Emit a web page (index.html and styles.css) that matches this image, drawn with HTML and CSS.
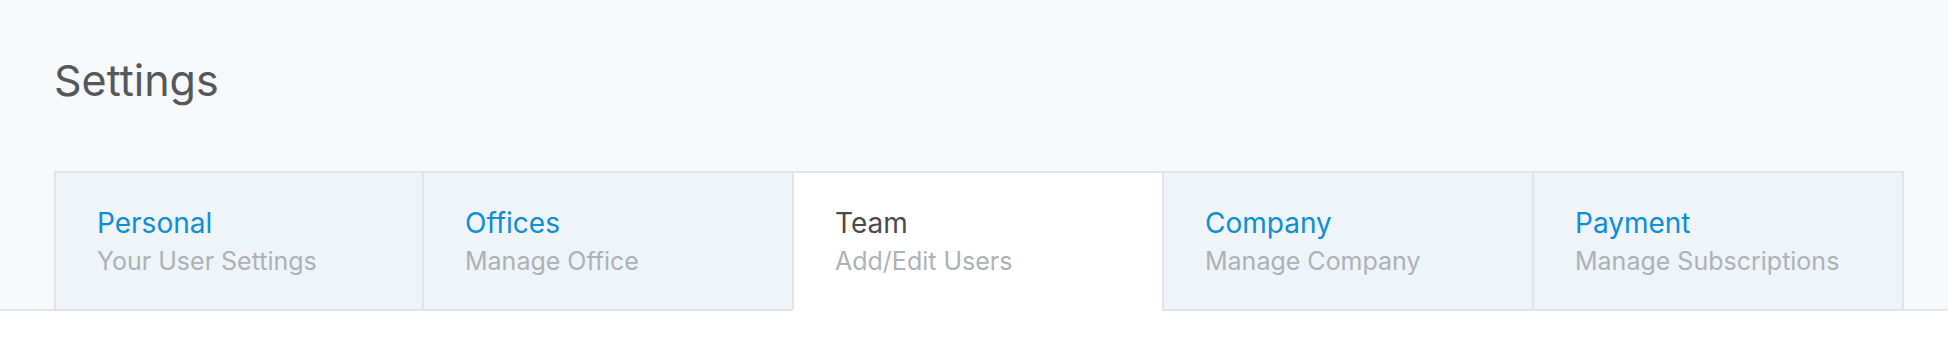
FILE: index.html
```html
<!DOCTYPE html>
<html lang="en">
<head>
<meta charset="utf-8">
<title>Settings</title>
<link rel="stylesheet" href="styles.css">
</head>
<body>
<header class="header">
  <h1 class="page-title">Settings</h1>
  <nav class="tabs">
    <a class="tab tab-first" href="#"><span class="tab-title">Personal</span><span class="tab-sub">Your User Settings</span></a>
    <a class="tab" href="#"><span class="tab-title">Offices</span><span class="tab-sub">Manage Office</span></a>
    <a class="tab tab-active" href="#"><span class="tab-title">Team</span><span class="tab-sub">Add/Edit Users</span></a>
    <a class="tab" href="#"><span class="tab-title">Company</span><span class="tab-sub">Manage Company</span></a>
    <a class="tab tab-last" href="#"><span class="tab-title">Payment</span><span class="tab-sub">Manage Subscriptions</span></a>
  </nav>
</header>
</body>
</html>
```
FILE: styles.css
```css
html, body {
  margin: 0;
  padding: 0;
  background: #ffffff;
  font-family: Inter, "Noto Sans", sans-serif;
}
.header {
  background: #f7f8fa;
  border-bottom: 2px solid #e1e4e8;
  padding: 54px 0 0 54px;
}
.page-title {
  margin: 0 0 65px 0;
  font-size: 43px;
  line-height: 52px;
  font-weight: 400;
  color: #555759;
}
.tabs {
  display: flex;
  margin-bottom: -2px;
}
.tab {
  box-sizing: border-box;
  width: 370px;
  height: 140px;
  display: flex;
  flex-direction: column;
  padding: 33px 0 0 41px;
  background: #eff4f8;
  border-top: 2px solid #e1e4e8;
  border-left: 2px solid #e1e4e8;
  border-bottom: 2px solid #e1e4e8;
  text-decoration: none;
}
.tab-first {
  width: 368px;
}
.tab-last {
  width: 372px;
  border-right: 2px solid #e1e4e8;
}
.tab-active {
  background: #ffffff;
  border-bottom-color: #ffffff;
}
.tab-title {
  font-size: 28px;
  line-height: 34px;
  color: #0c8fd6;
}
.tab-active .tab-title {
  color: #4a4b4d;
}
.tab-sub {
  margin-top: 6px;
  font-size: 25px;
  line-height: 30px;
  color: #aeb2b6;
}
```
